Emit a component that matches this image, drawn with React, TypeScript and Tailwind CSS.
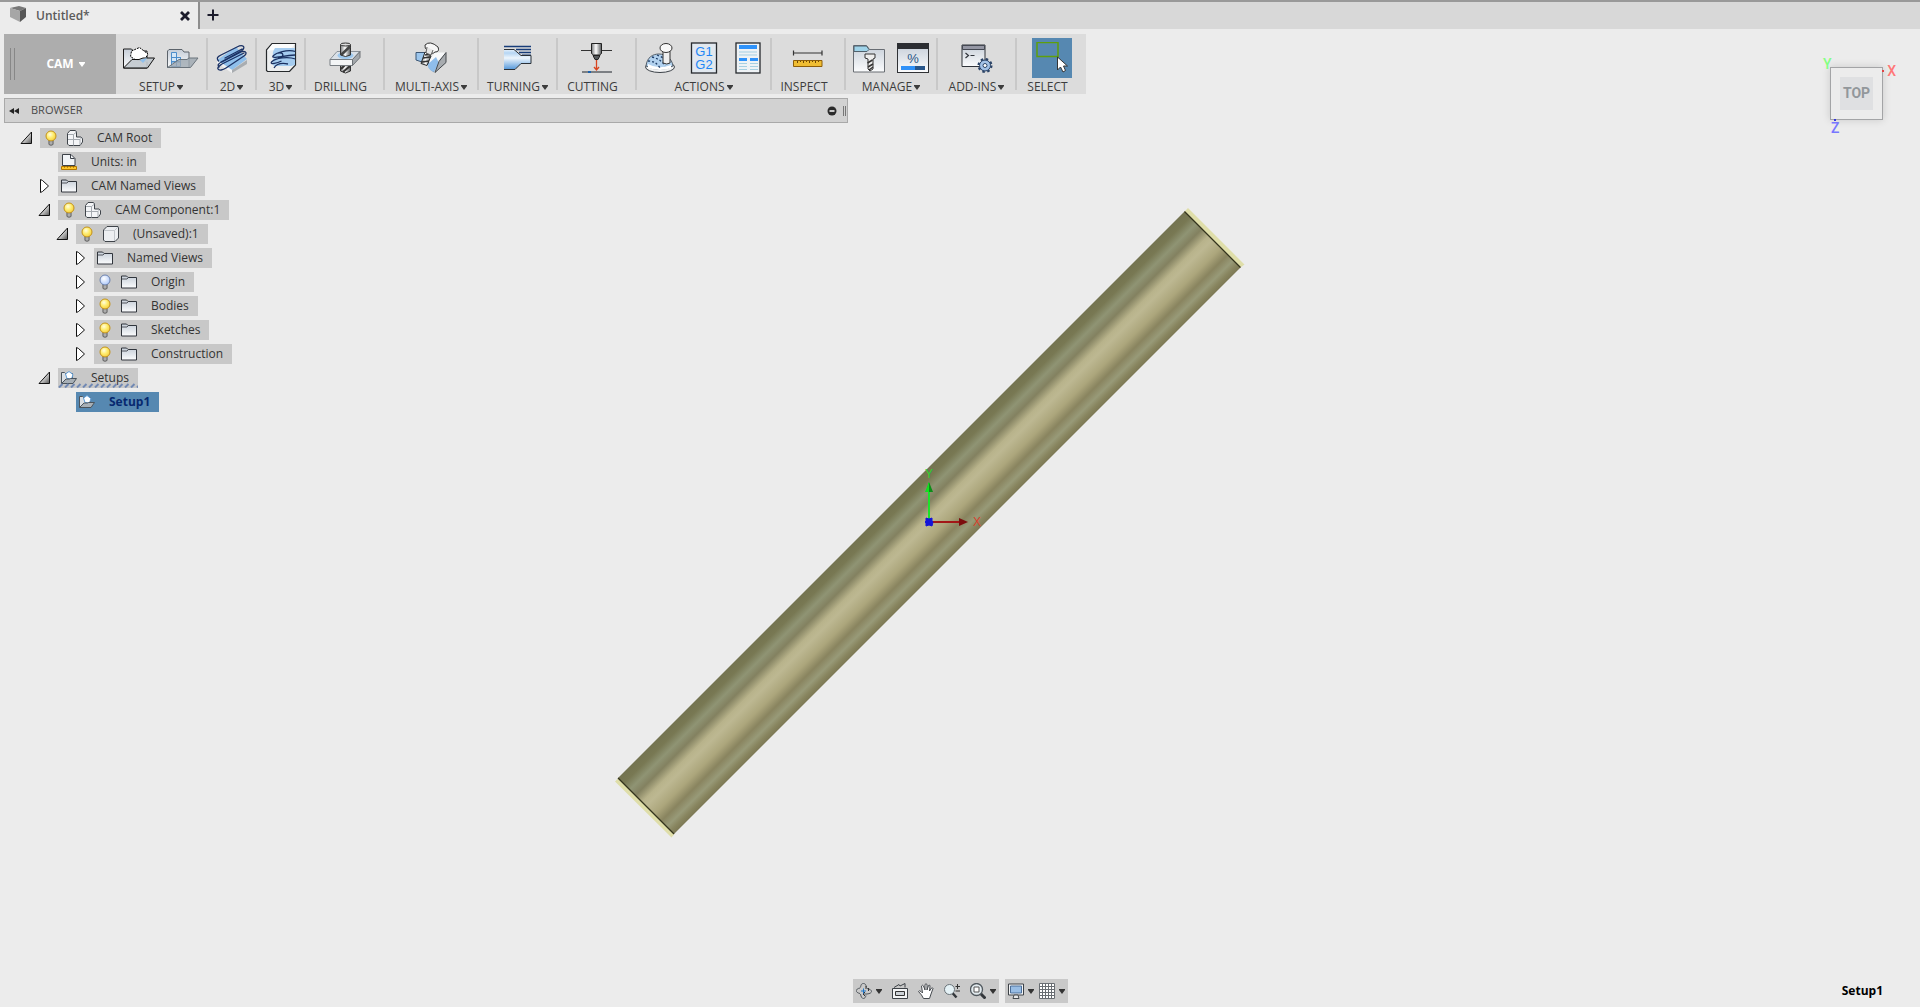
import React, { useState } from 'react';

type IconProps = { children: React.ReactNode; size?: number; className?: string };

function Icon({ children, size = 32, className = '' }: IconProps) {
  return (
    <svg width={size} height={size} viewBox={`0 0 ${size} ${size}`} fill="none" className={`shrink-0 ${className}`} aria-hidden="true">
      {children}
    </svg>
  );
}

// Gradients shared by all the icons
function SharedGradients() {
  return (
    <svg width="0" height="0" className="absolute" aria-hidden="true">
      <defs>
        <linearGradient id="steel" x1="0" y1="0" x2="0" y2="1">
          <stop offset="0" stopColor="#c6ced8" />
          <stop offset="1" stopColor="#fbfcfd" />
        </linearGradient>
        <linearGradient id="sky" x1="0" y1="0" x2="0" y2="1">
          <stop offset="0" stopColor="#eef6fd" />
          <stop offset="0.2" stopColor="#b5d5f3" />
          <stop offset="0.45" stopColor="#eef6fd" />
          <stop offset="1" stopColor="#5b9cdc" />
        </linearGradient>
        <linearGradient id="metal" x1="0" y1="0" x2="1" y2="0">
          <stop offset="0" stopColor="#77797b" />
          <stop offset="0.45" stopColor="#ffffff" />
          <stop offset="1" stopColor="#55585a" />
        </linearGradient>
        <linearGradient id="corner" x1="0" y1="0" x2="1" y2="1">
          <stop offset="0.3" stopColor="#ffffff" />
          <stop offset="1" stopColor="#555555" />
        </linearGradient>
        <radialGradient id="bulbOn" cx="0.4" cy="0.35" r="0.7">
          <stop offset="0" stopColor="#fffde0" />
          <stop offset="0.5" stopColor="#ffec6b" />
          <stop offset="1" stopColor="#f3c93d" />
        </radialGradient>
        <radialGradient id="bulbOff" cx="0.4" cy="0.35" r="0.7">
          <stop offset="0" stopColor="#ffffff" />
          <stop offset="1" stopColor="#a9c6fb" />
        </radialGradient>
      </defs>
    </svg>
  );
}

/* ---------- Toolbar icons ---------- */

const SetupIcon = () => (
  <Icon>
    <path d="M.5 26v-19h8l2 2h13.500v17z" fill="url(#steel)" stroke="#1c1c1c" />
    <path d="M7 12h3l9 8h6v-3l-4-5z" fill="#9cc8ef" />
    <path d="M8.500 9 16.500 5.500 25 12l-4 7-9-1.500-4.500-3z" fill="#fff" stroke="#000" strokeDasharray="2 1" />
    <path d="M.5 26 9 17.500h7l4-1.500h11.500l-7 10z" fill="#c2c9ce" fillOpacity=".9" stroke="#111" />
    <path d="m17 18 3 3 4-5z" fill="#90c0ec" />
  </Icon>
);

const NewFolderIcon = () => (
  <Icon>
    <path d="M.5 25.500V9l1.500-1.500h13l2 2.500h5v15.500z" fill="url(#steel)" stroke="#5c636b" />
    <path d="M4.500 10.500h5v5h4v4h-9zM4.500 15.500h9v9h-9zM9.500 15.500v9M4.500 20h9" fill="#d5e7f7" stroke="#4d8ecb" />
    <path d="M.5 25.500 12 17.500h8l2-1.500h9l-7.500 9.500z" fill="#9ea8b0" fillOpacity=".8" stroke="#6b747c" />
  </Icon>
);

const Milling2dIcon = () => (
  <Icon>
    <path d="M1 18 20 5l11 12-15 11z" fill="#8fbfeb" />
    <path d="m1 18 15 10v3L1 21z" fill="#f1f2f4" />
    <path d="m16 28 15-10v4L16 31z" fill="#a9adb1" />
    <path
      d="M2.500 19C0 16 2 14.500 5 13L21 5c6-3 9 0 5 3.500L5 20M9 16 26 7M3 25c-2-2 0-4 3-5L25 10c6-2 6 2 3 4L10 26c-3 2-7 3-8 1s1-3 4-5l22-11"
      stroke="#1b3265"
      strokeWidth="1.300"
      strokeLinecap="round"
    />
  </Icon>
);

const Milling3dIcon = () => (
  <Icon>
    <path d="M1.500 8 7 1.500h23.500V23l-6 6.500h-22l-1-1z" fill="#eceeef" stroke="#26292c" strokeWidth="1.200" />
    <path d="M2 8.500 7.500 2H30l-5 5.500z" fill="#fbfcfc" />
    <path d="M10 6h20v17l-4 1H9q-3-2 0-9-3-3 1-9z" fill="#a5ccef" />
    <path
      d="M30.500 9.500C22 7 11 11 8 14c-2 3 8 0 22-1M30.500 17c-8-3-20-1-24 3-2 3 6 1 10-1M9 26c3-5 9-5 14-4M13 11c6-1 7 4 0 5"
      stroke="#1a3060"
      strokeWidth="1.300"
    />
  </Icon>
);

const DrillingIcon = () => (
  <Icon>
    <path d="M11.500 18h10v11l-5 2-5-2z" fill="url(#metal)" stroke="#333" />
    <path d="m12 27 8-8M14 30l7-6" stroke="#333" strokeWidth="2" />
    <path d="M1 17.500 8 9.500h23L23.500 17.500z" fill="#d9e0e7" stroke="#8a9299" />
    <ellipse cx="16.500" cy="13.500" rx="8" ry="3.500" fill="#9dc8ee" />
    <path d="M1 17.500h22.500v6H1z" fill="#f3f5f6" stroke="#777d82" />
    <path d="m23.500 17.500 7.500-8v6l-7.500 8z" fill="#a3a8ac" stroke="#6e7377" />
    <path d="M11.500 3q5-2.500 10 0v10q-5 3-10 0z" fill="url(#metal)" stroke="#333" />
    <path d="m12 13 9-8.500" stroke="#444" strokeWidth="2.500" />
    <ellipse cx="16.500" cy="2.500" rx="5" ry="1.500" fill="#ddd" stroke="#333" />
  </Icon>
);

const MultiAxisIcon = () => (
  <Icon>
    <path d="M1 10.500h10l4 16 4 3.500L13 22 1 18z" fill="#9cc6ed" stroke="#3b5675" />
    <path d="M13 19 20 10.500h11L19 23z" fill="#f8f9fa" />
    <path d="m13 22 8-7 3 6-5 9q-4-1-6-5z" fill="#8fbdea" />
    <path d="m24 19.500 7-9v10L20 30.500z" fill="#a7abaf" stroke="#44494d" />
    <path d="m10 10 6 4-4 9.500-6-2z" fill="url(#metal)" stroke="#26292b" />
    <path d="m8 16 7-1M7 20l7-1M10 13l6-1" stroke="#333" strokeWidth="1.500" />
    <path d="M10 3q5-5 13 2 2 5-3 5-3 3-7-1-4-3-3-6z" fill="#f7f7f7" stroke="#333" />
    <path d="m12 5-1 6 5 2 2-5" fill="#e7e7e7" stroke="#666" />
  </Icon>
);

const TurningIcon = () => (
  <Icon>
    <path d="M2 4.500h27M14 7.500h15M17 10.500h12" stroke="#173c79" strokeWidth="1.500" />
    <path d="M20 13h9" stroke="#173c79" />
    <path d="M2 7h10l7 7h10v8H19l-6 5H2z" fill="url(#sky)" />
    <path d="M2 7.500h10l7 6h10v8H19l-6 6H2" stroke="#2b3036" />
  </Icon>
);

const CuttingIcon = () => (
  <Icon>
    <path d="M0 8.500h31" stroke="#333" />
    <path d="M10.500 1.500h10v10l-2 1.500h-6l-2-1.500z" fill="url(#metal)" stroke="#222" />
    <path d="M12 13.500h7l-2 4h-3z" fill="#55595c" stroke="#222" />
    <path d="M15.500 18v10m-2.500-3 2.500 3 2.500-3" stroke="#d9441f" strokeWidth="1.300" />
    <path d="M1 30h30" stroke="#7c7f83" strokeWidth="2" />
    <path d="M7 30h3" stroke="#1961ad" strokeWidth="2" />
  </Icon>
);

const SimulateIcon = () => (
  <Icon>
    <ellipse cx="16" cy="25" rx="14.500" ry="5.500" fill="#f0f1f2" stroke="#3c4248" />
    <path d="M2 24C3 15 9 12 15 12s13 4 14 12q-13 7-27 0z" fill="#b2d2ef" stroke="#555f69" />
    <path d="M4 22q10 6 23 1v3q-10 4-23 0z" fill="#fff" />
    <path d="M4 19q8 0 12 7M8 15q9 2 13 9M13 13q8 3 12 8" stroke="#1d3c67" strokeWidth="1.300" strokeDasharray="2 2" />
    <path d="M19 8h7v13q-3 2-7 0z" fill="#efefef" stroke="#333" />
    <ellipse cx="22" cy="6" rx="6" ry="4.500" fill="#f8f8f8" stroke="#333" />
  </Icon>
);

const PostProcessIcon = () => (
  <Icon>
    <rect x="3.500" y="1" width="25" height="30" fill="#e1e8ef" stroke="#26292d" strokeWidth="1.300" />
    <text x="16" y="14" textAnchor="middle" fontFamily="Liberation Sans, sans-serif" fontSize="13" fill="#1e86f5">
      G1
    </text>
    <text x="16" y="27" textAnchor="middle" fontFamily="Liberation Sans, sans-serif" fontSize="13" fill="#1e86f5">
      G2
    </text>
  </Icon>
);

const SetupSheetIcon = () => (
  <Icon>
    <rect x="4" y="1" width="24" height="30" fill="#eef2f5" stroke="#26292d" strokeWidth="1.300" />
    <path d="M7 3h18v4H7zM7 16h8v3H7zM18 16h8v3h-8z" fill="#2e92fa" />
    <path d="M7 10h18M7 13h18M7 21.500h8M18 21.500h8M7 24.500h8M18 24.500h8M7 27.500h8M18 27.500h8" stroke="#a5cfe2" />
  </Icon>
);

const InspectIcon = () => (
  <Icon>
    <path d="M1.500 8.500v5M30 8.500v5M1.500 11h28.500" stroke="#333" strokeWidth="1.200" />
    <path d="M1.500 18.500h28.500v6h-28.500z" fill="#f0bd32" stroke="#8e5e08" />
    <path d="M5.500 19v2M8.500 19v1M11.500 19v2M14.500 19v1M17.500 19v2M20.500 19v1M23.500 19v2M26.500 19v1" stroke="#6d4704" />
  </Icon>
);

const ToolLibraryIcon = () => (
  <Icon>
    <path d="M.5 30v-26.500h13l3 4h15v22.500z" fill="url(#steel)" stroke="#686d73" />
    <path d="M1 4h12.500l2.500 3.500-2 2H1z" fill="#9fd3e9" stroke="#51616c" />
    <path d="M12 12h10v4l-2 1v10l-3 2-2-2V17l-3-1z" fill="#eee" stroke="#333" />
    <path d="m14.500 21 5-3M15 25l5-3M16 28l4-3" stroke="#333" strokeWidth="1.500" />
  </Icon>
);

const TaskManagerIcon = () => (
  <Icon>
    <rect x=".5" y="2" width="31" height="28.500" fill="url(#steel)" stroke="#303235" />
    <path d="M0 1h32v6H0z" fill="#2c2e32" />
    <text x="16" y="21" textAnchor="middle" fontFamily="Liberation Sans, sans-serif" fontSize="13" fill="#275584">
      %
    </text>
    <path d="M4 24h14v4H4z" fill="#2f91f8" />
    <path d="M18 24h10v4H18z" fill="#28568a" />
  </Icon>
);

const AddInsIcon = () => (
  <Icon>
    <path d="M1 3h23v21.500H1z" fill="url(#steel)" stroke="#30343b" />
    <path d="M1.500 3.500h22v4h-22z" fill="#9597a4" stroke="#444852" />
    <path d="m4.500 11 3 2.500-3 2.500M9.500 13.500h4" stroke="#30343b" strokeWidth="1.200" />
    <circle cx="24" cy="23.500" r="5.500" fill="#93b5df" stroke="#2b4366" />
    <circle cx="24" cy="23.500" r="6.500" stroke="#2b4366" strokeWidth="2" strokeDasharray="2.500 2.600" />
    <circle cx="24" cy="23.500" r="4.500" fill="#a4c2e7" />
    <circle cx="24" cy="23.500" r="2" fill="#fff" stroke="#2b4366" />
  </Icon>
);

const SelectIcon = () => (
  <Icon>
    <path d="M1 .5h21v14H1z" stroke="#5f9f0c" strokeWidth="1.500" />
    <path d="M21.500 15v13l3-3 2.500 5 2.500-1.500-2-4.500h4z" fill="#fff" stroke="#333" />
  </Icon>
);

/* ---------- Browser icons ---------- */

const Bulb = ({ on }: { on: boolean }) => (
  <Icon size={16}>
    <path d="M6 10h4v4.500q-2 1.500-4 0z" fill="#e3e3e3" stroke="#555" />
    <circle cx="8" cy="6" r="5" fill={on ? 'url(#bulbOn)' : 'url(#bulbOff)'} stroke={on ? '#c4931c' : '#6d82ae'} />
    <path d="M6 12h4M6 14h4" stroke="#777" />
  </Icon>
);

const ComponentIcon = () => (
  <Icon size={16}>
    <path d="M.5 14V3.500L3 .5h5L9.500 1.500v5.500h4.500l1.500 1.500V12L13 15.500H2z" fill="#f4f5f7" stroke="#3f444a" />
    <path d="M1 4.500h5.500l3-2.500M6.500 4.500v11M7 9.500h6l2-2M13 9.500V15M1 9.500h5.500" stroke="#a5aab0" />
  </Icon>
);

const BodyIcon = () => (
  <Icon size={16}>
    <path d="M.5 14V4L4 .5h11l.5 1V12L12 15.500H2z" fill="#eceef1" stroke="#3f444a" />
    <path d="M1 4.500h10.500L15 1M11.500 4.500V15" stroke="#c2c6cb" />
  </Icon>
);

const UnitsIcon = () => (
  <Icon size={16}>
    <path d="M1.500 11.500V.500h8.500l4 4v7z" fill="#f1f4f7" stroke="#3c4148" />
    <path d="M9.500.500v4h4" stroke="#3c4148" />
    <path d="M.5 12.500h15v3H.500z" fill="#ffc629" stroke="#b37700" />
    <path d="M3.500 12.500v1M6.500 12.500v1M9.500 12.500v1M12.500 12.500v1" stroke="#7b5200" />
  </Icon>
);

const FolderIcon = () => (
  <Icon size={16}>
    <path d="M.5 14v-12h5l1.500 1.500h8.500v10.500z" fill="url(#steel)" stroke="#30353c" />
    <path d="M1 5h5l1.500-1.500" stroke="#50555c" />
  </Icon>
);

const SetupFolderIcon = () => (
  <Icon size={16}>
    <path d="M.5 13.500v-11h3l1 1h7v10z" fill="#d9dee3" stroke="#4b545c" />
    <path d="M4.500 4 8 1.500l4 3L10.500 9 6 8.500z" fill="#fff" stroke="#5b9bd8" />
    <path d="M.5 13.500 5 9h3.500l1-.500h6l-3.500 5z" fill="#a8b0b7" stroke="#4b545c" />
  </Icon>
);

/* ---------- Navigation bar icons ---------- */

const OrbitIcon = () => (
  <Icon size={16}>
    <path d="M4.500 4.500C5 1 6 .500 7.500.500s2.500 1 3 4M4.500 11c.500 3 1.500 4.500 3 4.500 1 0 2-1 2.500-3" stroke="#50565c" />
    <path d="M4 5C-1 6-1 9.500 4 10.500M11 5.500c6 1 6 5 0 5.500H7" stroke="#50565c" />
    <path d="m9 9-2 2 2 2M10 3v3M12.500 5v3" stroke="#333" />
    <path d="M5 8h5M7.500 5.500v5" stroke="#1b74c9" />
  </Icon>
);

const LookAtIcon = () => (
  <Icon size={16}>
    <path d="M.5 5.500h15v10H.500z" fill="#f3f4f5" stroke="#3c4146" />
    <path d="M3.500 8.500h9v4h-9z" fill="#ccd1d6" stroke="#333" />
    <path d="M2 4.500 7 1.500l1 1.500L13 .500v4" stroke="#3c4146" />
  </Icon>
);

const PanIcon = () => (
  <Icon size={16}>
    <path
      d="M5.500 15.500 3.500 12 .500 8.500q1-1.500 2.500 0l1.500 1.500L3.500 3q1-1.500 2 0L7 7V1.500q1-1.500 2 0V7l1.500-4.500q1.500-1 1.500.500l-.500 5 2-3q1.500-.500 1.500.500L13 11l-1.500 4.500z"
      fill="#fff"
      stroke="#464a4f"
    />
  </Icon>
);

const ZoomIcon = () => (
  <Icon size={16}>
    <path d="m8 9.500 4.500 5" stroke="#33373b" strokeWidth="2.500" />
    <circle cx="5.500" cy="6.500" r="5" fill="#e5f2f6" stroke="#6a7379" />
    <path d="M11.500 3.500h4.500M13.500 1v5M11.500 8h4.500" stroke="#333" />
  </Icon>
);

const FitIcon = () => (
  <Icon size={16}>
    <path d="m10.500 10.500 5 5" stroke="#33373b" strokeWidth="3" />
    <circle cx="6.500" cy="6.500" r="6" fill="#e2eaee" stroke="#50585e" strokeWidth="1.300" />
    <path d="M4 4h5v5H4z" fill="#fff" stroke="#555" />
  </Icon>
);

const DisplayIcon = () => (
  <Icon size={16}>
    <path d="M.5 1h15v11H.500z" fill="#f4f5f6" stroke="#3c4146" />
    <path d="M2.500 3h11v7h-11z" fill="#98bde5" stroke="#4b6f9a" />
    <path d="M6 12h4l1 3.500H5z" fill="#e8e9ea" stroke="#44494e" />
  </Icon>
);

const GridIcon = () => (
  <Icon size={16}>
    <path d="M.5.500h15v15H.500z" fill="#fff" />
    <path d="M.5.500h15v15H.500zM3.500.500v15M6.500.500v15M9.500.500v15M12.500.500v15M.5 3.500h15M.5 6.500h15M.5 9.500h15M.5 12.500h15" stroke="#686d72" />
  </Icon>
);

/* ---------- Small glyphs ---------- */

const Caret = ({ className = '' }: { className?: string }) => (
  <svg width="6" height="5" viewBox="0 0 6 5" className={`shrink-0 ${className}`} aria-hidden="true">
    <path d="M0 0h6v1L3 5 0 1z" fill="currentColor" />
  </svg>
);

const Expander = ({ open }: { open: boolean }) => (
  <svg width="12" height="14" viewBox="0 0 12 14" aria-hidden="true">
    {open ? (
      <path d="M11.500 1v11.500H1z" fill="url(#corner)" stroke="#111" />
    ) : (
      <path d="M2.500.500v13l2-1 6-5.500-6-5.500z" fill="#fff" stroke="#111" />
    )}
  </svg>
);

const TOOL_GROUPS = [
  { label: 'SETUP', menu: true, width: 'w-[92px]', icons: [SetupIcon, NewFolderIcon] },
  { label: '2D', menu: true, width: 'w-[49px]', icons: [Milling2dIcon] },
  { label: '3D', menu: true, width: 'w-[49px]', icons: [Milling3dIcon] },
  { label: 'DRILLING', menu: false, width: 'w-[79px]', icons: [DrillingIcon] },
  { label: 'MULTI-AXIS', menu: true, width: 'w-[94px]', icons: [MultiAxisIcon] },
  { label: 'TURNING', menu: true, width: 'w-[79px]', icons: [TurningIcon] },
  { label: 'CUTTING', menu: false, width: 'w-[79px]', icons: [CuttingIcon] },
  { label: 'ACTIONS', menu: true, width: 'w-[135px]', icons: [SimulateIcon, PostProcessIcon, SetupSheetIcon] },
  { label: 'INSPECT', menu: false, width: 'w-[74px]', icons: [InspectIcon] },
  { label: 'MANAGE', menu: true, width: 'w-[92px]', icons: [ToolLibraryIcon, TaskManagerIcon] },
  { label: 'ADD-INS', menu: true, width: 'w-[79px]', icons: [AddInsIcon] },
];

function Toolbar() {
  return (
    <div role="toolbar" className="flex h-[60px] w-fit bg-[#dcdcdc]">
      <button className="flex w-28 items-center bg-[#adadad] pl-[6px] text-[12px] font-bold text-white">
        <span className="h-8 w-[5px] border-x border-[#878787]" />
        <span className="flex flex-1 items-center justify-center gap-[5px]">
          CAM <Caret />
        </span>
      </button>
      {TOOL_GROUPS.map((group) => (
        <div key={group.label} className={`flex items-center ${group.width}`}>
          <div className="flex h-full min-w-0 flex-1 flex-col items-center">
            <div className="flex h-[47px] items-center gap-3">
              {group.icons.map((GroupIcon, i) => (
                <button key={i} aria-label={group.label}>
                  <GroupIcon />
                </button>
              ))}
            </div>
            <button className="flex h-3 items-center gap-[2px] text-[12px] leading-3 whitespace-nowrap text-[#3c3c3c]">
              {group.label}
              <Caret className={group.menu ? '' : 'invisible'} />
            </button>
          </div>
          <span className="h-[52px] w-[2px] bg-[#c8c8c8]" />
        </div>
      ))}
      <div className="flex w-[69px] flex-col items-center">
        <button aria-label="SELECT" className="mt-1 mb-[3px] flex h-10 w-10 items-center justify-center bg-[#5688b1]">
          <SelectIcon />
        </button>
        <button className="flex h-3 items-center gap-[2px] text-[12px] leading-3 text-[#3c3c3c]">
          SELECT
          <Caret className="invisible" />
        </button>
      </div>
    </div>
  );
}

type TreeNode = {
  label: string;
  indent: string;
  icon: () => React.ReactElement;
  open?: boolean;
  bulb?: boolean;
  state?: 'generating' | 'selected';
};

const TREE: TreeNode[] = [
  { label: 'CAM Root', indent: 'pl-4', icon: ComponentIcon, open: true, bulb: true },
  { label: 'Units: in', indent: 'pl-[34px]', icon: UnitsIcon },
  { label: 'CAM Named Views', indent: 'pl-[34px]', icon: FolderIcon, open: false },
  { label: 'CAM Component:1', indent: 'pl-[34px]', icon: ComponentIcon, open: true, bulb: true },
  { label: '(Unsaved):1', indent: 'pl-[52px]', icon: BodyIcon, open: true, bulb: true },
  { label: 'Named Views', indent: 'pl-[70px]', icon: FolderIcon, open: false },
  { label: 'Origin', indent: 'pl-[70px]', icon: FolderIcon, open: false, bulb: false },
  { label: 'Bodies', indent: 'pl-[70px]', icon: FolderIcon, open: false, bulb: true },
  { label: 'Sketches', indent: 'pl-[70px]', icon: FolderIcon, open: false, bulb: true },
  { label: 'Construction', indent: 'pl-[70px]', icon: FolderIcon, open: false, bulb: true },
  { label: 'Setups', indent: 'pl-[34px]', icon: SetupFolderIcon, open: true, state: 'generating' },
  { label: 'Setup1', indent: 'pl-[52px]', icon: SetupFolderIcon, state: 'selected' },
];

function BrowserTree() {
  return (
    <ul className="flex flex-col gap-1 pt-[5px]">
      {TREE.map((node) => {
        const NodeIcon = node.icon;
        const selected = node.state === 'selected';
        return (
          <li key={node.label} className={`flex h-5 items-center ${node.indent}`}>
            <button aria-label={`Toggle ${node.label}`} className={`w-5 ${node.open === undefined ? 'invisible' : ''}`}>
              <Expander open={!!node.open} />
            </button>
            <button
              className={`relative flex h-5 items-center gap-[14px] pr-[9px] pl-[3px] text-[12px] leading-5 whitespace-nowrap ${
                selected ? 'bg-[#5688b1] font-bold text-[#07296f]' : 'bg-[#c8c8c8] text-[#333]'
              }`}
            >
              <span className="flex gap-2">
                {node.bulb !== undefined && <Bulb on={node.bulb} />}
                <NodeIcon />
              </span>
              {node.label}
              {node.state === 'generating' && (
                <svg className="absolute bottom-0 left-0 h-[5px] w-full" aria-hidden="true">
                  <defs>
                    <pattern id="hatch" width="6" height="5" patternUnits="userSpaceOnUse">
                      <path d="M1 4.500 4.500 1" stroke="#7189b4" strokeWidth="2" />
                    </pattern>
                  </defs>
                  <rect width="100%" height="5" fill="url(#hatch)" />
                </svg>
              )}
            </button>
          </li>
        );
      })}
    </ul>
  );
}

// Stock cylinder with its origin triad
function ModelView() {
  return (
    <svg viewBox="0 29 1920 978" className="absolute inset-0 h-full w-full" role="img" aria-label="Model">
      <defs>
        <linearGradient id="stock" gradientUnits="userSpaceOnUse" x1="618" y1="778" x2="674" y2="834">
          <stop offset="0" stopColor="#737350" />
          <stop offset="0.1" stopColor="#787853" />
          <stop offset="0.21" stopColor="#8f9474" />
          <stop offset="0.31" stopColor="#838160" />
          <stop offset="0.43" stopColor="#b8b38b" />
          <stop offset="0.5" stopColor="#bdb892" />
          <stop offset="0.65" stopColor="#aca67c" />
          <stop offset="0.77" stopColor="#89845f" />
          <stop offset="0.87" stopColor="#989a78" />
          <stop offset="0.94" stopColor="#88855f" />
          <stop offset="1" stopColor="#7c7854" />
        </linearGradient>
      </defs>
      <path d="M1184.500 211.500 1188 208l56.500 56.500-4 3zM618.500 778l-3.500 3.500 56.500 56 3-3.500z" fill="#dfdea9" />
      <path d="M618 778 1184.500 211.500l56 56L674 834z" fill="url(#stock)" />
      <path d="m1184.500 211.500 56 56M618 778l56 56" stroke="#33331c" strokeWidth="1.300" />
      <path d="M929 521v-38" stroke="#1be32a" strokeWidth="2" />
      <path d="m929 482 4 10h-7z" fill="#0d8d18" />
      <path d="m929 482-4 10h4z" fill="#12df20" />
      <path d="M929 522h32" stroke="#a31717" strokeWidth="2" />
      <path d="m968 522-9-4v8z" fill="#7d0d0d" />
      <path d="m926 518 3 1 3-1v3l1 1-1 4-3-1-3 1v-3l-1-1 1-1z" fill="#1414d8" stroke="#1414d8" />
      <text x="929" y="478" textAnchor="middle" fontFamily="Liberation Sans, sans-serif" fontSize="12" fill="#2bd22f">
        Y
      </text>
      <text x="977" y="526" textAnchor="middle" fontFamily="Liberation Sans, sans-serif" fontSize="12" fill="#d9412f">
        X
      </text>
    </svg>
  );
}

function ViewCube() {
  return (
    <div className="relative mt-[38px] mr-[37px] h-[53px] w-[53px] shrink-0 font-['Roboto']">
      <button className="flex h-full w-full items-center justify-center border border-[#a3a4a6] bg-[#ececec] shadow-[0_0_8px_rgba(0,0,0,0.15)]">
        <span className="flex h-[33px] w-[33px] items-center justify-center bg-[#dfe0e2] text-[14px] font-bold text-[#92979b]">
          TOP
        </span>
      </button>
      <span className="absolute -top-[10px] -left-[7px] text-[14px] leading-[14px] font-medium text-[#83ff83]">Y</span>
      <span className="absolute -top-1 -right-[13px] flex items-center gap-[3px] text-[14px] leading-4 font-medium text-[#ff7777] before:h-[2px] before:w-[2px] before:bg-[#e04444]">
        X
      </span>
      <span className="absolute top-[52px] left-[1px] flex flex-col items-center text-[14px] leading-[14px] font-medium text-[#7777ff] before:h-[2px] before:w-[2px] before:bg-[#3333dd]">
        Z
      </span>
    </div>
  );
}

const NAV_GROUPS = [
  [
    { name: 'Orbit', icon: OrbitIcon, menu: true },
    { name: 'Look at', icon: LookAtIcon, menu: false },
    { name: 'Pan', icon: PanIcon, menu: false },
    { name: 'Zoom', icon: ZoomIcon, menu: false },
    { name: 'Fit', icon: FitIcon, menu: true },
  ],
  [
    { name: 'Display settings', icon: DisplayIcon, menu: true },
    { name: 'Grid and snaps', icon: GridIcon, menu: true },
  ],
];

function NavigationBar() {
  return (
    <nav className="flex gap-[6px]">
      {NAV_GROUPS.map((group, i) => (
        <div key={i} className={`flex h-6 items-center bg-[#c9c9c9] px-[3px] ${i === 0 ? 'gap-[10px]' : 'gap-[5px]'}`}>
          {group.map(({ name, icon: NavIcon, menu }) => (
            <button key={name} aria-label={name} className="flex items-center gap-1 text-[#333]">
              <NavIcon />
              {menu && <Caret />}
            </button>
          ))}
        </div>
      ))}
    </nav>
  );
}

export default function App() {
  const [browserOpen, setBrowserOpen] = useState(true);

  return (
    <div className="flex h-screen flex-col overflow-hidden bg-[#ececec] font-['Open_Sans','Noto_Sans',sans-serif] text-[12px]">
      <SharedGradients />

      {/* Document tabs */}
      <header className="flex h-[29px] shrink-0 border-t-2 border-[#999] bg-[#d8d8d8]">
        <div className="flex w-[200px] items-center border-r-2 border-[#8e8e8e] bg-[#ececec] pr-[8px] pl-[10px]">
          <Icon size={16} className="-mt-1">
            <path d="m0 2 9-2 7 2-6 3z" fill="#777" />
            <path d="m0 2 10 3v11L0 11z" fill="#a6a6a6" />
            <path d="m10 5 6-3v9l-6 5z" fill="#565656" />
          </Icon>
          <span className="ml-[10px] flex-1 text-[12px] font-semibold text-[#5a5a5a]">Untitled*</span>
          <button aria-label="Close tab">
            <Icon size={10}>
              <path d="m1 1 8 8m0-8-8 8" stroke="#1b1b2b" strokeWidth="2.800" />
            </Icon>
          </button>
        </div>
        <button aria-label="New tab" className="-mt-[2px] ml-[7px]">
          <Icon size={12}>
            <path d="M6 .500v11M.500 6h11" stroke="#1b1b2b" strokeWidth="2" />
          </Icon>
        </button>
      </header>

      <main className="relative flex min-h-0 flex-1 flex-col">
        <ModelView />

        <div className="relative flex flex-1 items-start justify-between">
          <div className="pt-[5px] pl-1">
            <Toolbar />
            <section className="mt-1 w-[844px]">
              <div className="flex h-[25px] items-center border border-[#a9a9a9] bg-[#d2d2d2] pl-1">
                <button aria-label="Collapse browser" onClick={() => setBrowserOpen(!browserOpen)}>
                  <svg width="10" height="6" viewBox="0 0 10 6" aria-hidden="true">
                    <path d="M5 0v6L0 3zM10 0v6L5 3z" fill="#222" />
                  </svg>
                </button>
                <h2 className="ml-3 flex-1 text-[11px] text-[#4a4a4a]">BROWSER</h2>
                <button aria-label="Hide panel">
                  <Icon size={10}>
                    <circle cx="5" cy="5" r="4.500" fill="#2b2b2b" />
                    <path d="M2.500 5h5" stroke="#fff" strokeWidth="1.500" />
                  </Icon>
                </button>
                <span className="mr-[1px] ml-[6px] h-[10px] w-[3px] border-x border-[#777]" />
              </div>
              {browserOpen && <BrowserTree />}
            </section>
          </div>
          <ViewCube />
        </div>

        <footer className="relative grid grid-cols-[1fr_auto_1fr] items-center pb-1">
          <span />
          <NavigationBar />
          <span className="pr-[37px] text-right text-[12px] font-bold text-black">Setup1</span>
        </footer>
      </main>
    </div>
  );
}
